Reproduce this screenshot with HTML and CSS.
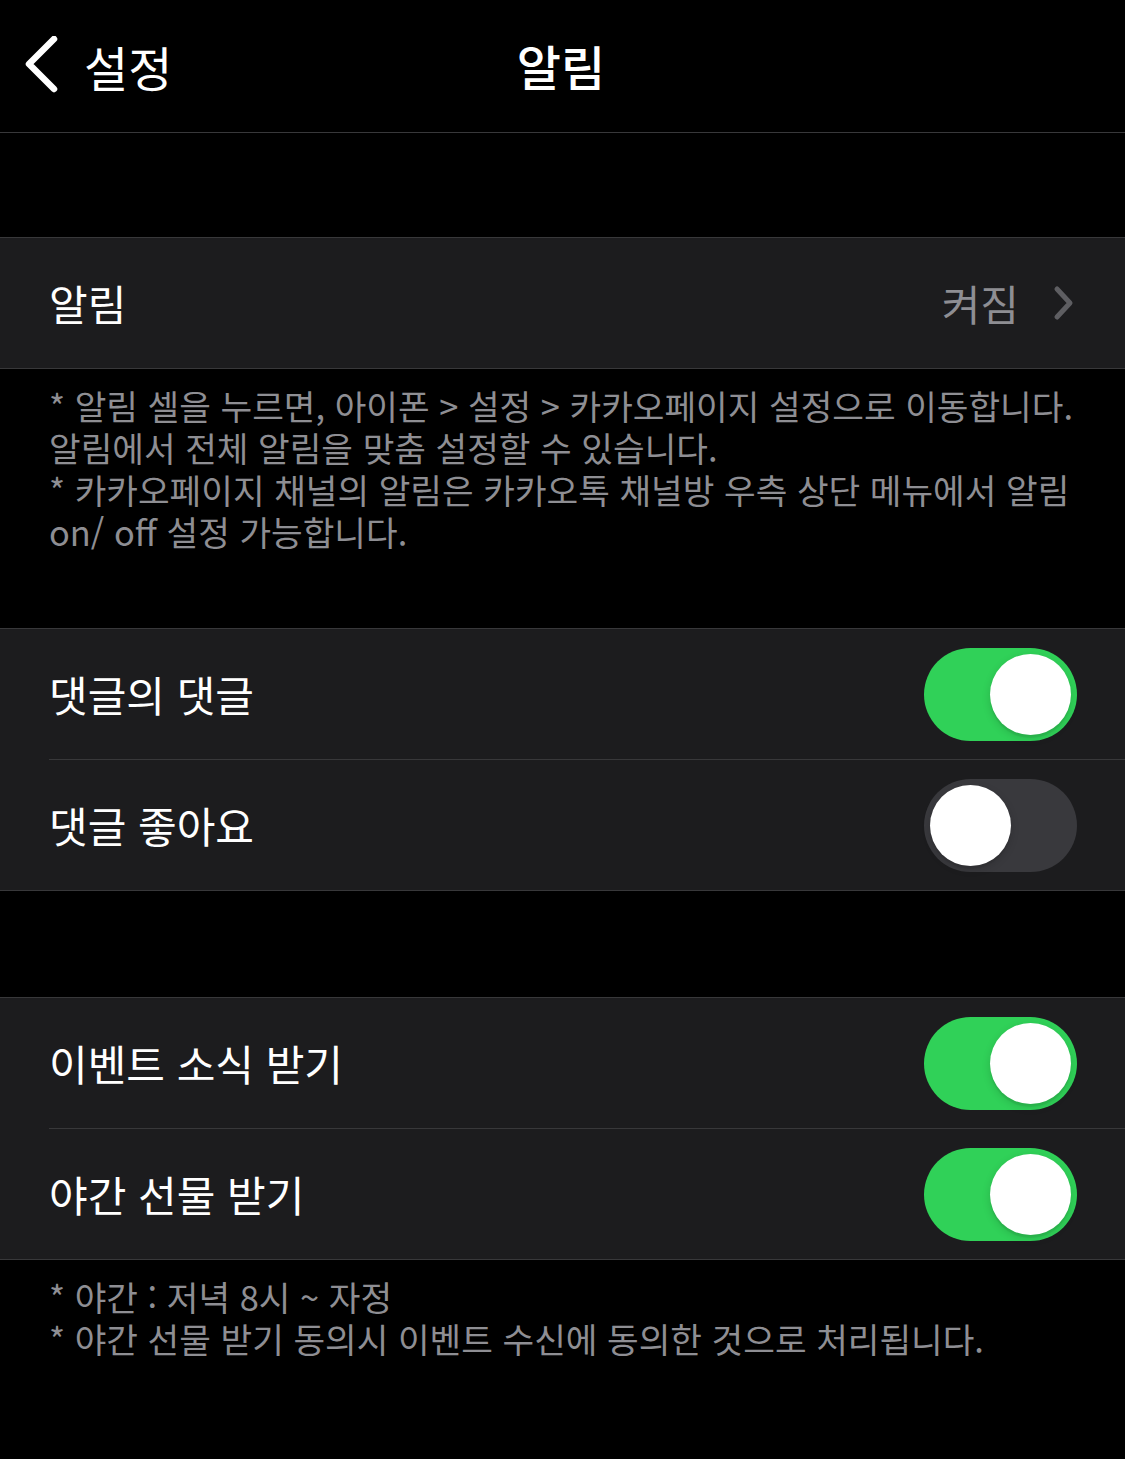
FILE: index.html
```html
<!DOCTYPE html>
<html lang="ko">
<head>
<meta charset="utf-8">
<link rel="stylesheet" href="styles.css">
</head>
<body>
<header class="nav">
  <div class="back">
    <svg class="back-icon" width="40" height="60" viewBox="0 0 40 60"><polyline points="30,3 5,28 30,53" fill="none" stroke="#fff" stroke-width="6.5" stroke-linecap="round" stroke-linejoin="round"/></svg>
    <span class="back-label">설정</span>
  </div>
  <div class="title">알림</div>
</header>
<div class="spacer"></div>
<section class="group">
  <div class="row">
    <span class="label">알림</span>
    <span class="value">켜짐
      <svg class="chev" width="22" height="36" viewBox="0 0 22 36"><polyline points="4,4 17,18 4,32" fill="none" stroke="#5e5e62" stroke-width="5" stroke-linecap="round" stroke-linejoin="round"/></svg>
    </span>
  </div>
</section>
<div class="note note-top">
  <p>* 알림 셀을 누르면, 아이폰 &gt; 설정 &gt; 카카오페이지 설정으로 이동합니다.</p>
  <p>알림에서 전체 알림을 맞춤 설정할 수 있습니다.</p>
  <p>* 카카오페이지 채널의 알림은 카카오톡 채널방 우측 상단 메뉴에서 알림</p>
  <p>on/ off 설정 가능합니다.</p>
</div>
<section class="group">
  <div class="row sep">
    <span class="label">댓글의 댓글</span>
    <span class="toggle on"><span class="knob"></span></span>
  </div>
  <div class="row">
    <span class="label">댓글 좋아요</span>
    <span class="toggle"><span class="knob"></span></span>
  </div>
</section>
<div class="spacer spacer2"></div>
<section class="group">
  <div class="row sep">
    <span class="label">이벤트 소식 받기</span>
    <span class="toggle on"><span class="knob"></span></span>
  </div>
  <div class="row">
    <span class="label">야간 선물 받기</span>
    <span class="toggle on"><span class="knob"></span></span>
  </div>
</section>
<div class="note note-bottom">
  <p>* 야간 : 저녁 8시 ~ 자정</p>
  <p>* 야간 선물 받기 동의시 이벤트 수신에 동의한 것으로 처리됩니다.</p>
</div>
</body>
</html>
```
FILE: styles.css
```css
* { box-sizing: border-box; }
html, body {
  margin: 0;
  padding: 0;
  background: #000;
  font-family: "Noto Sans CJK KR", "Noto Sans", sans-serif;
  color: #fff;
}
body { width: 1125px; min-height: 1459px; }
p { margin: 0; }

.nav {
  height: 133px;
  border-bottom: 1px solid #38383a;
  display: flex;
  align-items: center;
  justify-content: center;
  position: relative;
}
.back {
  position: absolute;
  left: 24px;
  top: 36px;
  display: flex;
  align-items: center;
  gap: 20px;
}
.back-icon { display: block; }
.back-label {
  font-size: 48px;
  line-height: 60px;
}
.title {
  font-size: 48px;
  font-weight: 500;
  line-height: 60px;
  margin-top: -2px;
  margin-left: -3px;
}

.spacer { height: 104px; }
.spacer2 { height: 106px; }

.group {
  background: #1c1c1e;
  border-top: 1px solid #38383a;
  border-bottom: 1px solid #38383a;
}
.row {
  height: 130px;
  margin-left: 49px;
  padding-right: 48px;
  display: flex;
  align-items: center;
  justify-content: space-between;
  position: relative;
}
.row.sep { height: 131px; border-bottom: 1px solid #38383a; }
.label {
  font-size: 42px;
  line-height: 56px;
}
.value {
  font-size: 42px;
  line-height: 56px;
  color: #8e8e93;
  display: flex;
  align-items: center;
  gap: 34px;
  margin-right: 2px;
}
.chev { display: block; }

.toggle {
  width: 153px;
  height: 93px;
  border-radius: 47px;
  background: #39393d;
  position: relative;
  display: block;
  flex: none;
}
.toggle.on { background: #30d158; }
.knob {
  position: absolute;
  top: 6px;
  left: 6px;
  width: 81px;
  height: 81px;
  border-radius: 50%;
  background: #fff;
  box-shadow: 0 3px 8px rgba(0,0,0,0.15), 0 3px 1px rgba(0,0,0,0.06);
}
.toggle.on .knob { left: 66px; }

.note {
  padding: 0 49px;
  font-size: 34.4px;
  line-height: 42px;
  color: #8e8e93;
}
.note-top { height: 259px; padding-top: 15px; }
.note-bottom { padding-top: 15px; }
```
